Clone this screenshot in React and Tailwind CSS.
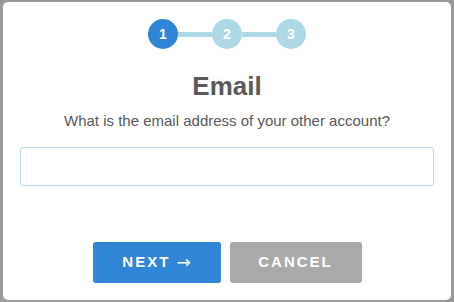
import React from "react";

const Step = ({ n, active }) => (
  <div
    className={`flex h-[30px] w-[30px] items-center justify-center rounded-full text-[14px] font-bold text-white ${
      active ? "bg-[#3085d6]" : "bg-[#add8e6]"
    }`}
  >
    {n}
  </div>
);

const App = () => {
  return (
    <div className="h-[302px] w-[454px] bg-[#9a9a9a] pt-[2px] pl-[3px] font-['Helvetica','Liberation_Sans',Arial,sans-serif]">
      <div className="flex h-[298px] w-[448px] flex-col items-center rounded-[5px] bg-white">
        <div className="mt-[17px] flex items-center">
          <Step n="1" active />
          <div className="h-[5px] w-[34px] bg-[#add8e6]" />
          <Step n="2" />
          <div className="h-[5px] w-[34px] bg-[#add8e6]" />
          <Step n="3" />
        </div>
        <h2 className="mt-[22px] text-[26px] leading-[30px] font-bold text-[#595959]">Email</h2>
        <p className="mt-[11px] text-[15px] leading-[18px] text-[#595959]">
          What is the email address of your other account?
        </p>
        <input
          type="email"
          className="mt-[17px] h-[39px] w-[414px] rounded-[3px] border border-[#b4dbed] outline-none"
        />
        <div className="mt-[56px] flex gap-[9px]">
          <button className="flex h-[41px] w-[128px] items-center justify-center rounded-[3px] bg-[#3085d6] text-[15px] font-bold tracking-[2px] text-white">
            NEXT
            <span className="ml-[6px] font-['DejaVu_Sans',sans-serif] text-[17px] font-normal tracking-normal">→</span>
          </button>
          <button className="h-[41px] w-[132px] rounded-[3px] bg-[#aaaaaa] text-[15px] font-bold tracking-[2px] text-white">
            CANCEL
          </button>
        </div>
      </div>
    </div>
  );
};

export default App;
